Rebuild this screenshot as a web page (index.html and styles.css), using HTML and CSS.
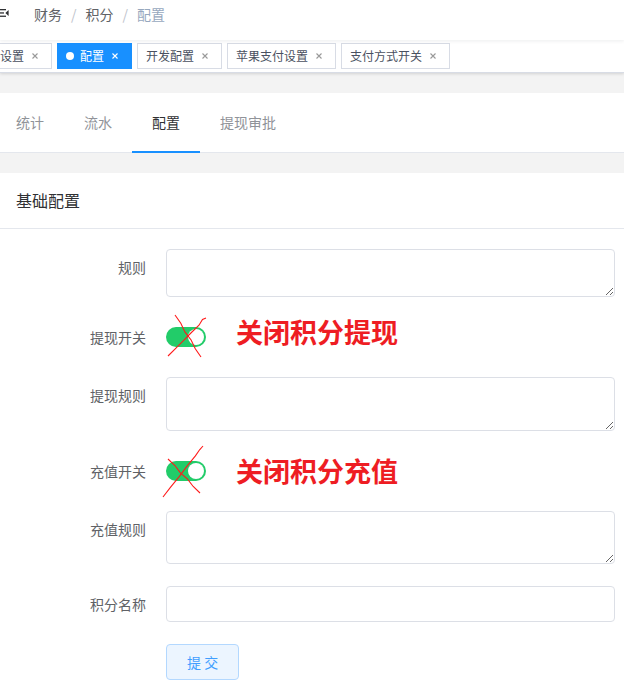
FILE: index.html
```html
<!DOCTYPE html>
<html lang="zh-CN">
<head>
<meta charset="utf-8">
<title>配置</title>
<link rel="stylesheet" href="styles.css">
</head>
<body>
<div class="navbar">
  <svg class="fold" width="9" height="8" viewBox="0 0 9 8">
    <rect x="0" y="0" width="6" height="1.3" fill="#303133"/>
    <rect x="0" y="3.3" width="4" height="1.3" fill="#303133"/>
    <rect x="0" y="6.6" width="6" height="1.3" fill="#303133"/>
    <polygon points="8.6,1 8.6,7 5.4,4" fill="#303133"/>
  </svg>
  <div class="breadcrumb">
    <span class="crumb">财务</span><span class="sep">/</span><span class="crumb">积分</span><span class="sep">/</span><span class="crumb current">配置</span>
  </div>
</div>

<div class="tags-view">
  <span class="tag first">设置<svg class="close" viewBox="0 0 16 16"><path d="M5.5 5.5 L10.5 10.5 M10.5 5.5 L5.5 10.5"/></svg></span>
  <span class="tag active"><i class="dot"></i>配置<svg class="close" viewBox="0 0 16 16"><path d="M5.5 5.5 L10.5 10.5 M10.5 5.5 L5.5 10.5"/></svg></span>
  <span class="tag">开发配置<svg class="close" viewBox="0 0 16 16"><path d="M5.5 5.5 L10.5 10.5 M10.5 5.5 L5.5 10.5"/></svg></span>
  <span class="tag">苹果支付设置<svg class="close" viewBox="0 0 16 16"><path d="M5.5 5.5 L10.5 10.5 M10.5 5.5 L5.5 10.5"/></svg></span>
  <span class="tag">支付方式开关<svg class="close" viewBox="0 0 16 16"><path d="M5.5 5.5 L10.5 10.5 M10.5 5.5 L5.5 10.5"/></svg></span>
</div>

<div class="main">
  <div class="tabs-card">
    <div class="tabs">
      <div class="tab">统计</div>
      <div class="tab">流水</div>
      <div class="tab is-active">配置</div>
      <div class="tab">提现审批</div>
    </div>
  </div>

  <div class="card">
    <div class="card-header">基础配置</div>
    <div class="card-body">
      <form class="form">
        <div class="form-item">
          <label class="form-label">规则</label>
          <div class="form-content"><textarea class="textarea h48"></textarea></div>
        </div>

        <div class="form-item">
          <label class="form-label">提现开关</label>
          <div class="form-content switch-row">
            <span class="switch"><span class="knob"></span></span>
            <span class="note note-1">关闭积分提现</span>
            <svg class="cross" width="60" height="60" viewBox="0 0 60 60">
              <polyline points="19,6 24.8,14.2 28.9,22.9 35.1,31 39.3,39.8 45,48"/>
              <polyline points="50,9 46.5,10.5 43,16.2 34.4,24.5 27.7,31.3 19.2,39.8 12,47"/>
            </svg>
          </div>
        </div>

        <div class="form-item">
          <label class="form-label">提现规则</label>
          <div class="form-content"><textarea class="textarea h54"></textarea></div>
        </div>

        <div class="form-item">
          <label class="form-label">充值开关</label>
          <div class="form-content switch-row">
            <span class="switch"><span class="knob"></span></span>
            <span class="note note-2">关闭积分充值</span>
            <svg class="cross" width="60" height="60" viewBox="0 0 60 60">
              <polyline points="12,16 18.9,22.5 24.4,29.9 31.6,36.1 37.2,43.5 44,50"/>
              <polyline points="47,3 43.6,6.8 39.4,12.9 30.6,23.7 23.4,33.3 14.6,44.1 7,54"/>
            </svg>
          </div>
        </div>

        <div class="form-item">
          <label class="form-label">充值规则</label>
          <div class="form-content"><textarea class="textarea h53"></textarea></div>
        </div>

        <div class="form-item">
          <label class="form-label">积分名称</label>
          <div class="form-content"><input class="input" type="text"></div>
        </div>

        <div class="form-item">
          <span class="form-label"></span>
          <div class="form-content"><button class="btn" type="button">提 交</button></div>
        </div>
      </form>
    </div>
  </div>
</div>
</body>
</html>
```

FILE: styles.css
```css
* { box-sizing: border-box; }

html, body {
  margin: 0;
  padding: 0;
  background: #fff;
  font-family: "Noto Sans CJK SC", "Noto Sans", sans-serif;
  color: #303133;
}

.navbar {
  position: relative;
  z-index: 3;
  height: 40px;
  display: flex;
  align-items: flex-start;
  background: #fff;
  box-shadow: 0 1px 4px rgba(0, 21, 41, 0.08);
}

.fold {
  display: block;
  margin-top: 9px;
  flex: none;
}

.breadcrumb {
  margin-left: 25px;
  font-size: 14px;
  line-height: 28px;
  color: #606266;
  display: flex;
}

.sep {
  margin: 0 9px;
  color: #c0c4cc;
}

.crumb.current { color: #97a8be; }

.tags-view {
  position: relative;
  z-index: 2;
  height: 33px;
  background: #fff;
  border-bottom: 1px solid #d8dce5;
  box-shadow: 0 1px 3px 0 rgba(0, 0, 0, 0.12), 0 0 3px 0 rgba(0, 0, 0, 0.04);
  display: flex;
  align-items: flex-start;
  overflow: hidden;
  white-space: nowrap;
}

.tag {
  display: inline-flex;
  align-items: center;
  flex: none;
  height: 26px;
  margin-top: 3px;
  margin-left: 5px;
  padding: 0 8px;
  border: 1px solid #d8dce5;
  background: #fff;
  color: #495060;
  font-size: 12px;
  line-height: 24px;
}

.tag.first { margin-left: -9px; }

.tag.active {
  background: #1890ff;
  border-color: #1890ff;
  color: #fff;
}

.dot {
  display: inline-block;
  width: 8px;
  height: 8px;
  border-radius: 50%;
  background: #fff;
  margin-right: 6px;
}

.close {
  width: 16px;
  height: 16px;
  margin-left: 3px;
  fill: none;
  stroke: #999;
  stroke-width: 1.1;
}

.tag.active .close { stroke: #fff; }

.main {
  background: #f3f3f3;
  padding-top: 20px;
}

.tabs-card { background: #fff; }

.tabs {
  display: flex;
  height: 60px;
  padding-left: 16px;
  border-bottom: 1px solid #e4e7ed;
}

.tab {
  padding: 0 20px;
  height: 60px;
  margin-bottom: -1px;
  line-height: 58px;
  font-size: 14px;
  color: #909399;
  border-bottom: 2px solid transparent;
}

.tab:first-child { padding-left: 0; }

.tab.is-active {
  color: #303133;
  border-bottom-color: #1890ff;
}

.card {
  margin-top: 20px;
  background: #fff;
}

.card-header {
  height: 56px;
  line-height: 55px;
  padding-left: 16px;
  font-size: 16px;
  color: #303133;
  border-bottom: 1px solid #e4e7ed;
}

.card-body {
  padding: 20px 9px 10px 0;
}

.form-item {
  display: flex;
  margin-bottom: 22px;
}

.form-label {
  flex: none;
  width: 166px;
  padding-right: 20px;
  text-align: right;
  font-size: 14px;
  line-height: 36px;
  color: #606266;
}

.form-content {
  flex: 1;
  position: relative;
  min-height: 36px;
}

.textarea {
  display: block;
  width: 100%;
  border: 1px solid #dcdfe6;
  border-radius: 4px;
  padding: 5px 15px;
  font-family: inherit;
  font-size: 14px;
  color: #606266;
  resize: vertical;
  outline: none;
  background: #fff;
}

.h48 { height: 48px; }
.h54 { height: 54px; }
.h53 { height: 53px; }

.input {
  display: block;
  width: 100%;
  height: 36px;
  border: 1px solid #dcdfe6;
  border-radius: 4px;
  padding: 0 15px;
  font-family: inherit;
  font-size: 14px;
  outline: none;
  background: #fff;
}

.switch-row {
  display: flex;
  align-items: center;
  height: 36px;
}

.switch {
  position: relative;
  display: block;
  width: 40px;
  height: 20px;
  border-radius: 10px;
  background: #22cc69;
}

.knob {
  position: absolute;
  top: 2px;
  left: 22px;
  width: 16px;
  height: 16px;
  border-radius: 50%;
  background: #fff;
}

.note {
  position: absolute;
  left: 70px;
  font-size: 27px;
  line-height: 27px;
  font-weight: 700;
  color: #ee1d23;
  white-space: nowrap;
}

.note-1 { top: -1px; }
.note-2 { top: 4px; }

.cross {
  position: absolute;
  left: -10px;
  top: -10px;
  fill: none;
  stroke: #ff1a1a;
  stroke-width: 1.1;
}

.btn {
  display: block;
  height: 36px;
  padding: 0 20px;
  border: 1px solid #b3d8ff;
  border-radius: 4px;
  background: #ecf5ff;
  color: #409eff;
  font-family: inherit;
  font-size: 14px;
  line-height: 34px;
}
```
